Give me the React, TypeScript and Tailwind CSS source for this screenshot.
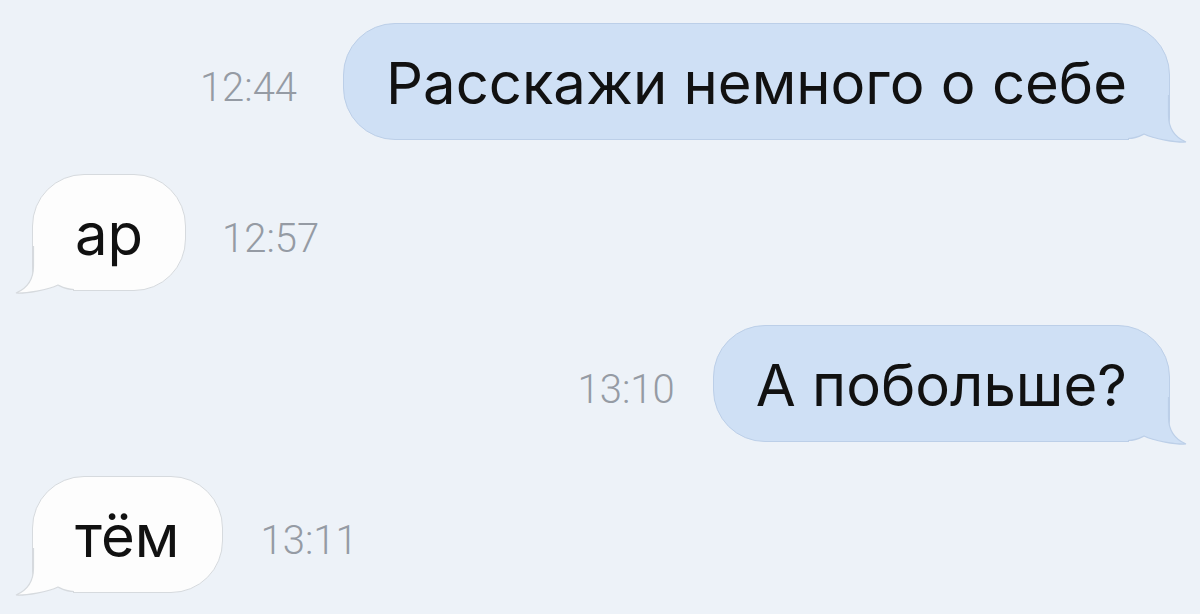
import React from "react";

type Side = "left" | "right";

const BG = "#edf2f8";

function Tail({ side, fill, stroke }: { side: Side; fill: string; stroke: string }) {
  const pos = side === "right" ? "right-[-20px]" : "left-[-20px] -scale-x-100";
  return (
    <svg
      className={`absolute bottom-[-4px] ${pos} overflow-visible`}
      width="60"
      height="52"
      viewBox="0 0 60 52"
    >
      <path
        d="M57 51 C47 51.5 25 48 15 43 C11 45 7 47.5 0 47.5 L0 50 L58 53 Z"
        fill={BG}
      />
      <path
        d="M39.5 4 L39.5 24 C39.5 37 45 46 57 51 C47 51.5 25 48 15 43 C11 45 7 47.5 -1 47.5"
        fill={fill}
        stroke={stroke}
        strokeWidth="1.2"
      />
    </svg>
  );
}

function Bubble({ side, text }: { side: Side; text: string }) {
  const blue = side === "right";
  const fill = blue ? "#cfe0f5" : "#fdfdfd";
  const stroke = blue ? "#bccfe8" : "#d6dade";
  return (
    <div
      className={`relative h-[117px] flex items-center px-[42px] rounded-[52px] border ${
        blue
          ? "bg-[#cfe0f5] border-[#bccfe8] rounded-br-[22px]"
          : "bg-[#fdfdfd] border-[#d6dade] rounded-bl-[22px]"
      }`}
    >
      <span
        className="relative z-10 text-[58px] leading-none text-[#111] pt-[2px]"
        style={{ fontFamily: "Inter, 'Liberation Sans', sans-serif" }}
      >
        {text}
      </span>
      <Tail side={side} fill={fill} stroke={stroke} />
    </div>
  );
}

function Time({ t }: { t: string }) {
  return (
    <span
      className="text-[40px] leading-none text-[#959ba4] font-light pt-[12px]"
      style={{ fontFamily: "Roboto, 'Liberation Sans', sans-serif" }}
    >
      {t}
    </span>
  );
}

export default function App() {
  return (
    <div
      className="w-[1200px] h-[614px] overflow-hidden bg-[#edf2f8] flex flex-col gap-[34px] pt-[23px]"
      style={{ fontFamily: "'Liberation Sans', Arial, sans-serif" }}
    >
      <div className="flex items-center justify-end gap-[46px] pr-[30px]">
        <Time t="12:44" />
        <Bubble side="right" text="Расскажи немного о себе" />
      </div>
      <div className="flex items-center gap-[36px] pl-[32px]">
        <Bubble side="left" text="ар" />
        <Time t="12:57" />
      </div>
      <div className="flex items-center justify-end gap-[38px] pr-[30px]">
        <Time t="13:10" />
        <Bubble side="right" text="А побольше?" />
      </div>
      <div className="flex items-center gap-[38px] pl-[32px]">
        <Bubble side="left" text="тём" />
        <Time t="13:11" />
      </div>
    </div>
  );
}
